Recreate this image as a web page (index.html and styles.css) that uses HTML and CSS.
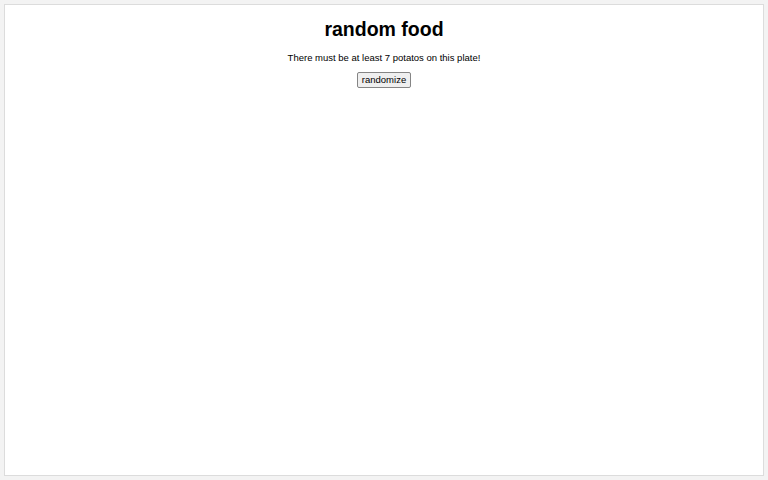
FILE: index.html
```html
<!DOCTYPE html>
<html lang="en">
<head>
    <meta charset="UTF-8">
    <meta name="viewport" content="width=device-width, initial-scale=1.0">
    <title>random food</title>
    <link rel="stylesheet" href="styles.css">
</head>
<body>
    <div class="page">
        <h1>random food</h1>
        <p id="food-text">There must be at least 7 potatos on this plate!</p>
        <button onclick="randomize()">randomize</button>
    </div>
    <script>
        var foods = ['potatos', 'carrots', 'meatballs', 'peas', 'pancakes', 'sausages'];

        function randomize() {
            var count = Math.floor(Math.random() * 10) + 1;
            var food = foods[Math.floor(Math.random() * foods.length)];
            document.getElementById('food-text').textContent =
                'There must be at least ' + count + ' ' + food + ' on this plate!';
        }
    </script>
</body>
</html>
```

FILE: styles.css
```css
html, body {
    height: 100%;
}

body {
    margin: 0;
    padding: 4px;
    box-sizing: border-box;
    background-color: #f3f3f3;
    font-family: "Liberation Sans", Arial, sans-serif;
}

.page {
    height: 100%;
    box-sizing: border-box;
    background-color: #fff;
    border: 1px solid #dcdcdc;
    text-align: center;
    padding-top: 13px;
}

h1 {
    margin: 0;
    font-size: 19.5px;
    line-height: 22px;
}

p {
    margin: 12px 0 5px;
    font-size: 9.5px;
    line-height: 12px;
}

button {
    font-family: "Liberation Sans", Arial, sans-serif;
    font-size: 9.5px;
    line-height: 12px;
    padding: 1px 4px;
    background-color: #efefef;
    border: 1px solid #858585;
    border-radius: 2px;
    color: #000;
}
```
